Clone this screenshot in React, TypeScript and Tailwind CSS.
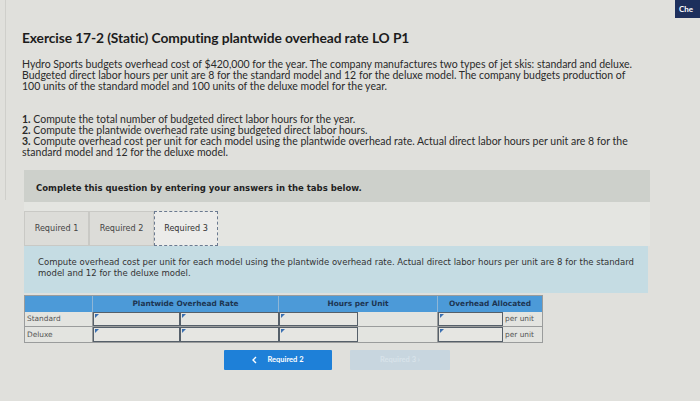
import React from "react";

const Inp = ({ w }: { w: string }) => (
  <div className={`relative h-full ${w} border-[1.5px] border-[#56606a] bg-[#e6e6e2]`}>
    <span className="absolute left-[1px] top-[1px] w-0 h-0 border-l-[4px] border-l-[#3a6fb0] border-b-[4px] border-b-transparent" />
  </div>
);

export default function App() {
  const body = { fontFamily: "Lato, 'Open Sans', sans-serif" };
  const verd = { fontFamily: "'DejaVu Sans', Verdana, sans-serif" };
  return (
    <div className="relative w-[700px] h-[401px] overflow-hidden bg-[#e0e0dc]">
      <div className="absolute left-[5px] top-0 h-[200px] w-px bg-[#cfcfcb]" />
      <div className="absolute right-0 top-0 w-[25px] h-[18px] bg-[#1d2f5c] text-white text-[8px] font-bold flex items-center pl-[4px]" style={body}>
        Che
      </div>
      <div className="pl-[22px] pt-[30px] text-[#2a2a2a]" style={body}>
        <h1 className="text-[13.8px] font-bold leading-[16px] text-[#1c1c1c] tracking-[-0.1px]">
          Exercise 17-2 (Static) Computing plantwide overhead rate LO P1
        </h1>
        <p className="mt-[13px] text-[10.5px] leading-[11px] w-[660px]">
          Hydro Sports budgets overhead cost of $420,000 for the year. The company manufactures two types of jet skis: standard and deluxe.
          <br />
          Budgeted direct labor hours per unit are 8 for the standard model and 12 for the deluxe model. The company budgets production of
          <br />
          100 units of the standard model and 100 units of the deluxe model for the year.
        </p>
        <div className="mt-[22px] text-[10.5px] leading-[11px] w-[660px]">
          <div><b>1.</b> Compute the total number of budgeted direct labor hours for the year.</div>
          <div><b>2.</b> Compute the plantwide overhead rate using budgeted direct labor hours.</div>
          <div><b>3.</b> Compute overhead cost per unit for each model using the plantwide overhead rate. Actual direct labor hours per unit are 8 for the</div>
          <div>standard model and 12 for the deluxe model.</div>
        </div>
      </div>
      <div className="ml-[24px] mt-[12px] w-[626px]" style={verd}>
        <div className="h-[32px] bg-[#cdd0cb] flex items-center pl-[12px] pt-[4px] text-[8.5px] font-bold text-[#1f1f1f]">
          Complete this question by entering your answers in the tabs below.
        </div>
        <div className="h-[9px] bg-[#e4e5e1]" />
        <div className="flex h-[35px] bg-[#e4e5e1] text-[8.1px] text-[#444]">
          <div className="w-[65px] border border-[#c9c9c5] bg-[#dcdcd8] flex items-center justify-center">Required 1</div>
          <div className="w-[65px] border border-[#c9c9c5] bg-[#dcdcd8] flex items-center justify-center">Required 2</div>
          <div className="w-[64px] border border-dashed border-[#6b7a90] bg-[#ececea] flex items-center justify-center text-[#333]">Required 3</div>
        </div>
        <div className="h-[47px] bg-[#c5dce3] pl-[14px] pt-[11px] text-[8.5px] leading-[10.5px] text-[#333] w-[624px]">
          <div className="whitespace-nowrap">Compute overhead cost per unit for each model using the plantwide overhead rate. Actual direct labor hours per unit are 8 for the standard</div>
          <div>model and 12 for the deluxe model.</div>
        </div>
        <div className="mt-[2px] w-[519px] text-[7.4px] text-[#555] border border-[#9a9c9c]">
          <div className="flex h-[16px] bg-[#4c9ad8] font-bold text-[#1d3552]">
            <div className="w-[68px] border-r border-[#8fb6d6]" />
            <div className="w-[186px] border-r border-[#8fb6d6] flex items-center justify-center">Plantwide Overhead Rate</div>
            <div className="w-[159px] border-r border-[#8fb6d6] flex items-center justify-center">Hours per Unit</div>
            <div className="flex-1 flex items-center justify-center">Overhead Allocated</div>
          </div>
          {["Standard", "Deluxe"].map((r, i) => (
            <div key={r} className={`flex h-[15px] bg-[#e3e4e0] ${i === 0 ? "border-b border-[#9a9c9c]" : ""}`}>
              <div className="w-[68px] pl-[2px] flex items-center border-r border-[#9a9c9c]">{r}</div>
              <Inp w="w-[87px]" />
              <Inp w="w-[99px]" />
              <Inp w="w-[79px]" />
              <div className="w-[80px] border-r border-[#9a9c9c]" />
              <Inp w="w-[65px]" />
              <div className="flex-1 flex items-center pl-[2px]">per unit</div>
            </div>
          ))}
        </div>
        <div className="flex mt-[7px] ml-[200px] gap-[18px]">
          <div className="w-[108px] h-[20px] bg-[#1e80d8] rounded-[1px] flex items-center justify-center gap-[10px] text-white text-[7.5px] font-bold" style={body}>
            <svg width="5" height="8" viewBox="0 0 5 8"><path d="M4 1 L1 4 L4 7" stroke="white" strokeWidth="1.4" fill="none" /></svg>
            <span>Required 2</span>
          </div>
          <div className="w-[100px] h-[20px] bg-[#c8d6df] rounded-[1px] flex items-center justify-center text-[#d8e3ea] text-[7.5px] font-bold" style={body}>
            Required 3 ›
          </div>
        </div>
      </div>
    </div>
  );
}
